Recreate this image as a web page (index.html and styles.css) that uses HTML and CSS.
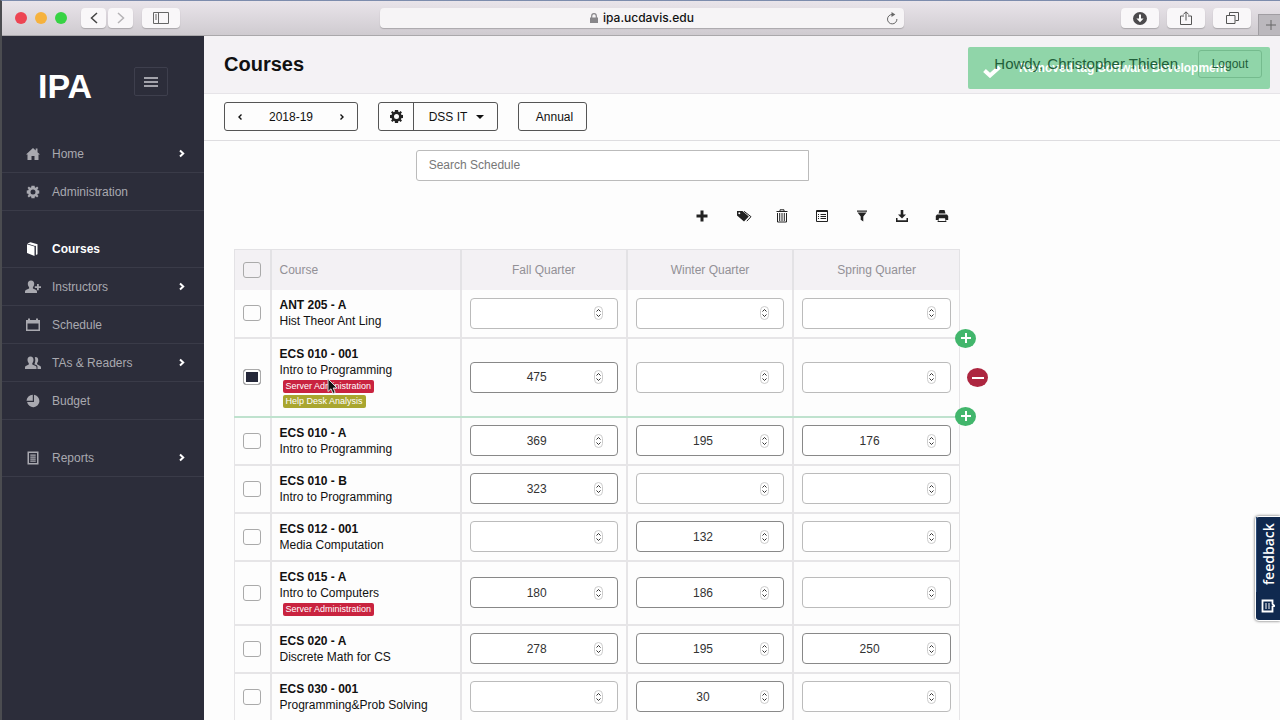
FILE: index.html
```html
<!DOCTYPE html>
<html lang="en">
<head>
    <meta charset="UTF-8">
    <meta name="viewport" content="width=device-width, initial-scale=1.0">
    <title>IPA - Courses</title>
    <link rel="stylesheet" href="styles.css">
</head>
<body>
    <!-- shared icons -->
    <svg class="sprite" aria-hidden="true">
        <symbol id="gear" viewBox="0 0 14 14">
            <path fill-rule="evenodd" d="M5.300 0h3.400l.3 1.900.9.4L11.400 1.100 12.900 2.600 11.700 4.100l.4 1 1.900.2v3.400l-1.900.2-.4 1 1.200 1.500-1.500 1.500-1.500-1.200-1 .4-.2 1.900H5.300l-.2-1.900-1-.4-1.500 1.200-1.500-1.500 1.200-1.500-.4-1L0 8.700V5.300l1.900-.2.4-1L1.100 2.600 2.600 1.100l1.500 1.200 1-.4zM7 4.300a2.700 2.700 0 1 0 0 5.400 2.700 2.700 0 0 0 0-5.400z"/>
        </symbol>
        <symbol id="chevron" viewBox="0 0 6 8">
            <path d="M1 1l3.200 3L1 7" fill="none" stroke="currentColor" stroke-width="2"/>
        </symbol>
        <symbol id="chevron-thin" viewBox="0 0 6 8">
            <path d="M1.500 1.500l2.500 2.500-2.500 2.500" fill="none" stroke="currentColor" stroke-width="1.400"/>
        </symbol>
    </svg>

    <header class="browser">
        <div class="lights"><span class="red"></span><span class="yellow"></span><span class="green"></span></div>
        <div class="nav-buttons">
            <button aria-label="Back"><svg width="8" height="12" viewBox="0 0 8 12"><path d="M7 1L1.500 6 7 11" fill="none" stroke="#444" stroke-width="1.500"/></svg></button>
            <button aria-label="Forward"><svg width="8" height="12" viewBox="0 0 8 12"><path d="M1 1l5.500 5L1 11" fill="none" stroke="#b5b3b6" stroke-width="1.500"/></svg></button>
        </div>
        <button class="wide" aria-label="Sidebar"><svg width="16" height="12" viewBox="0 0 16 12"><path d="M.5.5h15v11H.5zM5.500.5v11M2 3h2M2 5h2M2 7h2" fill="none" stroke="#666"/></svg></button>
        <div class="address">
            <svg width="8" height="10" viewBox="0 0 8 10"><path d="M0 4.500h8V10H0z" fill="#88868a"/><path d="M1.700 5V3a2.300 2.300 0 0 1 4.600 0v2" fill="none" stroke="#88868a" stroke-width="1.200"/></svg>
            <span>ipa.ucdavis.edu</span>
            <button class="reload" aria-label="Reload"><svg width="12" height="13" viewBox="0 0 12 13"><path d="M6.500 2.500A4.700 4.700 0 1 0 10.900 7" fill="none" stroke="#666"/><path d="M5.500 0L9.300 2.500 5.500 5z" fill="#666"/></svg></button>
        </div>
        <div class="right-buttons">
            <button class="wide" aria-label="Downloads"><svg width="14" height="13" viewBox="0 0 14 13"><ellipse cx="7" cy="6.500" rx="7" ry="6.500" fill="#4c4a4d"/><path d="M6 2.500h2v4h2.600L7 10.300 3.400 6.500H6z" fill="#fff"/></svg></button>
            <button class="wide" aria-label="Share"><svg width="12" height="14" viewBox="0 0 12 14"><path d="M4 5H.5v8.500h11V5H8M6 9.500V1M3.300 3.500L6 .800l2.700 2.700" fill="none" stroke="#555"/></svg></button>
            <button class="wide" aria-label="Tabs"><svg width="13" height="12" viewBox="0 0 13 12"><path d="M.5 3.500h8.500v8H.5zM3.500 3V.5h9v8H9.500" fill="none" stroke="#555"/></svg></button>
        </div>
        <button class="new-tab" aria-label="New tab"><svg width="12" height="12" viewBox="0 0 12 12"><path d="M6 1v10M1 6h10" stroke="#666"/></svg></button>
    </header>

    <div class="app">
        <aside class="sidebar">
            <div class="brand">
                <span class="logo">IPA</span>
                <button class="menu-toggle" aria-label="Toggle menu"><svg width="14" height="10" viewBox="0 0 14 10"><path d="M0 1h14M0 5h14M0 9h14" stroke="#a3a3ab" stroke-width="2"/></svg></button>
            </div>
            <nav>
                <ul>
                    <li><a href="#"><svg viewBox="0 0 16 14"><path d="M8 1L1 7.500h1.500V13h4V9h3v4h4V7.500H15l-2.500-2.300V1.500h-1.800v2z"/></svg>Home<svg class="more"><use href="#chevron"/></svg></a></li>
                    <li><a href="#"><svg viewBox="0 0 16 14"><use href="#gear" x="1.500" y=".5" width="13" height="13"/></svg>Administration</a></li>
                </ul>
                <ul>
                    <li class="active"><a href="#"><svg viewBox="0 0 16 14"><path d="M2 2.200L9.500 4.600V14L2 11z"/><path d="M2.300 1.500L5.500.200l7 2v10l-1.600.8V3.700L10 4z"/></svg>Courses</a></li>
                    <li><a href="#"><svg viewBox="0 0 16 14"><path d="M6 .500c2.200 0 3.200 1.400 3.200 3.300 0 1.600-.600 2.600-1.300 3.400v1.300l3.300 1.600c.500.300.8.900.8 1.500V13H0v-1.400c0-.600.300-1.200.8-1.500l3.300-1.600V7.200C3.400 6.400 2.800 5.400 2.800 3.800 2.800 1.900 3.800.500 6 .500z"/><path d="M12 4h1.800v2.200H16V8h-2.200v2.200H12V8H9.800V6.200H12z"/></svg>Instructors<svg class="more"><use href="#chevron"/></svg></a></li>
                    <li><a href="#"><svg viewBox="0 0 16 14"><path fill-rule="evenodd" d="M1 2h2V.5h2V2h6V.5h2V2h2v11H1zM2.500 5.500v6h11v-6z"/></svg>Schedule</a></li>
                    <li><a href="#"><svg viewBox="0 0 16 14"><path d="M10.500 1c1.800 0 2.700 1.300 2.700 3 0 1.500-.500 2.400-1.100 3.100v1.200l3 1.600c.600.300.9.800.9 1.400V13h-3.500v-2c0-1-.5-1.600-1.300-2L9.400 8.200c.600-1.200.9-2.500.9-4 0-1-.2-1.900-.5-2.800z"/><path d="M5.500.500c2.100 0 3 1.400 3 3.300 0 1.600-.500 2.600-1.200 3.400v1.300l3.300 1.500c.600.300.9.800.9 1.400V13H0v-1.600c0-.600.3-1.100.8-1.400l3-1.500V7.200C3.100 6.400 2.500 5.400 2.500 3.800 2.500 1.900 3.400.500 5.500.500z"/></svg>TAs &amp; Readers<svg class="more"><use href="#chevron"/></svg></a></li>
                    <li><a href="#"><svg viewBox="0 0 16 14"><path d="M9 .800a6.200 6.200 0 1 1-6.900 7.200H9zM7.800.800V6.800H1.500A6.300 6.300 0 0 1 7.800.800z"/></svg>Budget</a></li>
                </ul>
                <ul>
                    <li><a href="#"><svg viewBox="0 0 16 14"><path fill-rule="evenodd" d="M2.500.5h11v13h-11zM4 2v10h8V2z"/><path d="M5.300 3.500h5.400v1.200H5.300zM5.300 5.500h5.400v1.200H5.300zM5.300 7.500h5.400v1.200H5.300zM5.300 9.500h5.400v1.200H5.300z"/></svg>Reports<svg class="more"><use href="#chevron"/></svg></a></li>
                </ul>
            </nav>
        </aside>

        <main>
            <div class="page-header">
                <h1>Courses</h1>
                <div class="user">
                    <span>Howdy, Christopher Thielen</span>
                    <button>Logout</button>
                </div>
            </div>

            <div class="filters">
                <div class="group year">
                    <button aria-label="Previous year"><svg class="flip" width="6" height="8"><use href="#chevron-thin"/></svg></button>
                    <span>2018-19</span>
                    <button aria-label="Next year"><svg width="6" height="8"><use href="#chevron-thin"/></svg></button>
                </div>
                <div class="group">
                    <button class="settings" aria-label="Settings"><svg width="13" height="13"><use href="#gear"/></svg></button>
                    <button class="unit">DSS IT <span class="caret"></span></button>
                </div>
                <button class="group annual">Annual</button>
            </div>

            <div class="content">
                <input type="text" class="search" placeholder="Search Schedule" aria-label="Search Schedule">

                <div class="actions">
                    <button aria-label="Add"><svg viewBox="0 0 14 14"><path d="M5.500 1.500h3v4h4v3h-4v4h-3v-4h-4v-3h4z"/></svg></button>
                    <button aria-label="Tags"><svg class="tags" viewBox="0 0 16 14"><path fill-rule="evenodd" d="M1 2h5.500l6.300 5.500L8 12.500 1 6.500zM3.300 3.200a1 1 0 1 0 0 2 1 1 0 0 0 0-2z"/><path d="M8 2.300L15 7.700l-4.200 4.500" fill="none" stroke="#222"/></svg></button>
                    <button aria-label="Delete"><svg viewBox="0 0 14 14"><path d="M5 2V.8h4V2M1.500 2.500h11M2.500 4v9h9V4M4.700 4v8M7 4v8M9.300 4v8" fill="none" stroke="#222"/></svg></button>
                    <button aria-label="List"><svg viewBox="0 0 14 14"><path d="M1.500 1.500h11v11h-11zM1 2.500h12M3 5.500h1M5.500 5.500H11M3 7.500h1M5.500 7.500H11M3 9.500h1M5.500 9.500H11" fill="none" stroke="#222"/></svg></button>
                    <button aria-label="Filter"><svg viewBox="0 0 14 14"><path d="M2 1.500h10v1.200H2zM2.500 3.500h9L8.300 7.500v5l-2.600-1.800V7.500z"/></svg></button>
                    <button aria-label="Download"><svg viewBox="0 0 14 14"><path d="M5.700 1h2.600v4.500H11L7 9.500 3 5.500h2.700zM1 9h1.500v2.300h9V9H13v4H1z"/></svg></button>
                    <button aria-label="Print"><svg viewBox="0 0 14 14"><path fill-rule="evenodd" d="M3.500 4.500L4.500 1h5l1 3.500zM2 5.500h10l1.200 1.500v4H11l.5 2h-9l.5-2H.8V7zM4 9.300l-.6 2.700h7.200L10 9.300z"/></svg></button>
                </div>

                <table>
                    <colgroup><col class="col-check"><col class="col-course"><col><col><col></colgroup>
                    <thead>
                        <tr>
                            <th><input type="checkbox" aria-label="Select all"></th>
                            <th class="course">Course</th>
                            <th>Fall Quarter</th>
                            <th>Winter Quarter</th>
                            <th>Spring Quarter</th>
                        </tr>
                    </thead>
                    <tbody>
                        <tr>
                            <td><input type="checkbox" aria-label="Select ANT 205 - A"></td>
                            <td class="course"><strong>ANT 205 - A</strong><p>Hist Theor Ant Ling</p></td>
                            <td><input type="number" aria-label="Fall"></td>
                            <td><input type="number" aria-label="Winter"></td>
                            <td><input type="number" aria-label="Spring"></td>
                        </tr>
                        <tr class="selected">
                            <td><input type="checkbox" checked aria-label="Select ECS 010 - 001"></td>
                            <td class="course">
                                <strong>ECS 010 - 001</strong><p>Intro to Programming</p>
                                <div class="tag-list">
                                    <div class="tag server">Server Administration</div>
                                    <div class="tag help">Help Desk Analysis</div>
                                </div>
                                <svg class="pointer" width="12" height="17" viewBox="0 0 12 17"><path d="M1 1v12.500l3-2.700 2 4.700 2.200-1L6.200 10H10z" fill="#111" stroke="#ddd"/></svg>
                            </td>
                            <td><input type="number" value="475" aria-label="Fall"></td>
                            <td><input type="number" aria-label="Winter"></td>
                            <td>
                                <input type="number" aria-label="Spring">
                                <button class="round add above" aria-label="Add row above"><svg viewBox="0 0 12 12"><path d="M6 1v10M1 6h10"/></svg></button>
                                <button class="round remove" aria-label="Remove row"><svg viewBox="0 0 12 12"><path d="M0 6h12"/></svg></button>
                                <button class="round add below" aria-label="Add row below"><svg viewBox="0 0 12 12"><path d="M6 1v10M1 6h10"/></svg></button>
                            </td>
                        </tr>
                        <tr>
                            <td><input type="checkbox" aria-label="Select ECS 010 - A"></td>
                            <td class="course"><strong>ECS 010 - A</strong><p>Intro to Programming</p></td>
                            <td><input type="number" value="369" aria-label="Fall"></td>
                            <td><input type="number" value="195" aria-label="Winter"></td>
                            <td><input type="number" value="176" aria-label="Spring"></td>
                        </tr>
                        <tr>
                            <td><input type="checkbox" aria-label="Select ECS 010 - B"></td>
                            <td class="course"><strong>ECS 010 - B</strong><p>Intro to Programming</p></td>
                            <td><input type="number" value="323" aria-label="Fall"></td>
                            <td><input type="number" aria-label="Winter"></td>
                            <td><input type="number" aria-label="Spring"></td>
                        </tr>
                        <tr>
                            <td><input type="checkbox" aria-label="Select ECS 012 - 001"></td>
                            <td class="course"><strong>ECS 012 - 001</strong><p>Media Computation</p></td>
                            <td><input type="number" aria-label="Fall"></td>
                            <td><input type="number" value="132" aria-label="Winter"></td>
                            <td><input type="number" aria-label="Spring"></td>
                        </tr>
                        <tr>
                            <td><input type="checkbox" aria-label="Select ECS 015 - A"></td>
                            <td class="course">
                                <strong>ECS 015 - A</strong><p>Intro to Computers</p>
                                <div class="tag-list">
                                    <div class="tag server">Server Administration</div>
                                </div>
                            </td>
                            <td><input type="number" value="180" aria-label="Fall"></td>
                            <td><input type="number" value="186" aria-label="Winter"></td>
                            <td><input type="number" aria-label="Spring"></td>
                        </tr>
                        <tr>
                            <td><input type="checkbox" aria-label="Select ECS 020 - A"></td>
                            <td class="course"><strong>ECS 020 - A</strong><p>Discrete Math for CS</p></td>
                            <td><input type="number" value="278" aria-label="Fall"></td>
                            <td><input type="number" value="195" aria-label="Winter"></td>
                            <td><input type="number" value="250" aria-label="Spring"></td>
                        </tr>
                        <tr>
                            <td><input type="checkbox" aria-label="Select ECS 030 - 001"></td>
                            <td class="course"><strong>ECS 030 - 001</strong><p>Programming&amp;Prob Solving</p></td>
                            <td><input type="number" aria-label="Fall"></td>
                            <td><input type="number" value="30" aria-label="Winter"></td>
                            <td><input type="number" aria-label="Spring"></td>
                        </tr>
                    </tbody>
                </table>
            </div>

            <div class="toast">
                <svg width="18" height="13" viewBox="0 0 18 13"><path d="M1.500 5.500l5.500 5L16.500 2" fill="none" stroke="#fff" stroke-width="4"/></svg>
                <span>Removed tag Software Development</span>
            </div>
            <button class="feedback">
                <svg width="14" height="15" viewBox="0 0 14 15"><path d="M1.500 1.500h10V5l2 2-2 .5v5h-10z" fill="none" stroke="#fff" stroke-width="1.800"/><path d="M5 4v6M8 4v6" stroke="#fff"/></svg>
                <span>feedback</span>
            </button>
        </main>
    </div>
</body>
</html>
```
FILE: styles.css
```css
* {
    box-sizing: border-box;
}
body {
    display: flex;
    flex-direction: column;
    height: 100vh;
    margin: 0;
    overflow: hidden;
    border-top: 1px solid #7d8cad;
    border-left: 2px solid #4b4c50;
    background: #fdfdfd;
    color: #111;
    font-family: "Liberation Sans", Arial, sans-serif;
    font-size: 12px;
    line-height: 16px;
}
button {
    display: flex;
    align-items: center;
    justify-content: center;
    margin: 0;
    padding: 0;
    border: none;
    background: none;
    color: inherit;
    font: inherit;
    cursor: pointer;
}
.sprite {
    position: absolute;
    width: 0;
    height: 0;
}

/* browser bar */
.browser {
    position: relative;
    display: flex;
    flex: none;
    align-items: center;
    height: 35px;
    padding: 0 29px 0 13px;
    border-bottom: 1px solid #aaa8ab;
    background: linear-gradient(#e9e4ea, #cfcbd0);
}
.lights {
    display: flex;
    gap: 8px;
}
.lights span {
    width: 12px;
    height: 12px;
    border-radius: 50%;
}
.red { background: #ed4553; }
.yellow { background: #f6b23d; }
.green { background: #37d344; }
.browser button {
    width: 25px;
    height: 20px;
    border-radius: 4px;
    background: #f9f7f9;
    box-shadow: 0 1px 1px #aaa7ab;
}
.browser .wide {
    width: 38px;
}
.nav-buttons {
    display: flex;
    gap: 2px;
    margin: 0 9px 0 14px;
}
.address {
    position: relative;
    display: flex;
    flex: 1;
    align-items: center;
    justify-content: center;
    gap: 5px;
    height: 20px;
    margin: 0 217px 0 200px;
    border-radius: 4px;
    background: #f6f4f6;
    box-shadow: 0 1px 1px #aaa7ab;
    font-family: Inter, sans-serif;
    font-size: 12px;
    font-weight: 500;
}
.browser .reload {
    position: absolute;
    right: 0;
    background: none;
    box-shadow: none;
}
.right-buttons {
    display: flex;
    gap: 8px;
}
.browser .new-tab {
    position: absolute;
    right: 0;
    bottom: 0;
    width: 22px;
    height: 21px;
    padding-left: 3px;
    border: 1px solid #a09da2;
    border-width: 1px 0 0 1px;
    border-radius: 0;
    background: #bbb8bd;
    box-shadow: none;
}

.app {
    display: flex;
    flex: 1;
    min-height: 0;
}

/* sidebar */
.sidebar {
    flex: none;
    width: 202px;
    background: #2c2d3a;
    color: #a9a9b0;
}
.brand {
    display: flex;
    align-items: center;
    justify-content: space-between;
    height: 99px;
    padding: 0 36px;
}
.logo {
    color: #fff;
    font-size: 34px;
    font-weight: bold;
    line-height: 36px;
}
.menu-toggle {
    width: 34px;
    height: 29px;
    margin-bottom: 8px;
    border: 1px solid #3e3f4d;
    border-radius: 2px;
}
.sidebar ul {
    margin: 0 0 19px;
    padding: 0;
    list-style: none;
}
.sidebar li {
    border-bottom: 1px solid #3a3b48;
}
.sidebar a {
    display: flex;
    align-items: center;
    height: 37px;
    padding: 0 19px 0 23px;
    color: inherit;
    text-decoration: none;
}
.sidebar a svg {
    width: 16px;
    height: 14px;
    margin-right: 11px;
    fill: currentColor;
}
.sidebar .more {
    width: 6px;
    height: 9px;
    margin: 0 0 0 auto;
    color: #fff;
}
.sidebar .active {
    color: #fff;
    font-weight: bold;
}

/* main column */
main {
    position: relative;
    flex: 1;
    min-width: 0;
    overflow: hidden;
}
.page-header {
    display: flex;
    align-items: center;
    justify-content: space-between;
    height: 58px;
    padding: 0 18px 2px 20px;
    border-bottom: 1px solid #e6e4e8;
    background: #f4f2f5;
}
h1 {
    margin: 0;
    font-size: 20px;
    line-height: 24px;
}
.user {
    position: relative;
    z-index: 2;
    display: flex;
    align-items: center;
    gap: 20px;
    font-size: 15px;
    color: #1f5f3a;
}
.user button {
    width: 64px;
    height: 28px;
    border: 1px solid #75bb8e;
    border-radius: 3px;
    font-size: 12px;
}
.filters {
    display: flex;
    align-items: center;
    gap: 20px;
    height: 47px;
    padding: 0 0 1px 20px;
    border-bottom: 1px solid #dedde0;
}
.group {
    display: flex;
    align-items: center;
    height: 29px;
    border: 1px solid #555;
    border-radius: 3px;
}
.group button {
    height: 100%;
}
.year {
    width: 134px;
    justify-content: space-between;
}
.year button {
    width: 30px;
}
.flip {
    transform: scaleX(-1);
}
.settings {
    width: 35px;
    border-right: 1px solid #555;
    fill: #222;
}
.unit {
    width: 83px;
    padding-left: 2px;
    gap: 9px;
}
.caret {
    border: 4px solid transparent;
    border-top-color: #111;
    border-bottom: 0;
}
.annual {
    width: 69px;
    padding-left: 4px;
}

.content {
    margin: 0 289px 0 30px;
}
.search {
    display: block;
    width: 52%;
    height: 31px;
    margin: 9px auto 19px;
    padding: 0 12px 2px;
    border: 1px solid #bbb;
    border-radius: 3px 0 0 3px;
    background: #fff;
    font: inherit;
}
.search::placeholder {
    color: #777;
}
.actions {
    display: flex;
    justify-content: flex-end;
    margin: 0 29px 17px 0;
}
.actions button {
    width: 40px;
    height: 32px;
}
.actions svg {
    width: 14px;
    height: 14px;
    fill: #222;
}
.actions .tags {
    width: 16px;
    margin-left: 4px;
}

/* schedule table */
table {
    width: calc(100% - 31px);
    border-collapse: collapse;
    table-layout: fixed;
    border: 1px solid #e3e2e5;
}
.col-check {
    width: 36px;
}
.col-course {
    width: 190px;
}
th {
    height: 40px;
    padding: 0;
    border: 1px solid #e3e2e5;
    border-width: 0 2px;
    background: #f3f1f4;
    color: #929096;
    font-weight: normal;
}
td {
    position: relative;
    height: 48px;
    padding: 0;
    border: 2px solid #e6e5e7;
    text-align: center;
}
thead + tbody tr:first-child td {
    border-top-width: 0;
}
th:first-child,
td:first-child {
    border-left-width: 1px;
}
th:last-child,
td:last-child {
    border-right-width: 1px;
}
.selected td {
    border-top-color: #d3dfda;
    border-bottom-color: #bfe2ce;
}
.course {
    padding: 7px 8px;
    text-align: left;
}
.course strong,
.course p {
    display: block;
    margin: 0;
}
input[type="checkbox"] {
    display: block;
    width: 18px;
    height: 16px;
    margin: 0 auto;
    border: 1px solid #aaa;
    border-radius: 3px;
    appearance: none;
}
input[type="checkbox"]:checked {
    background: #25283a;
    box-shadow: inset 0 0 0 2px #fff;
}
input[type="number"] {
    display: block;
    width: calc(100% - 16px);
    height: 31px;
    margin: 0 auto;
    padding: 0 25px 0 11px;
    border: 1px solid #888;
    border-radius: 4px;
    background: #fff url("data:image/svg+xml,%3Csvg xmlns='http://www.w3.org/2000/svg' width='9' height='14'%3E%3Crect x='.5' y='.5' width='8' height='13' rx='4' fill='%23fff' stroke='%23ccc'/%3E%3Cpath d='M2.500 5.500l2-2 2 2M2.500 8.500l2 2 2-2' fill='none' stroke='%23333'/%3E%3C/svg%3E") no-repeat right 14px center;
    color: #333;
    font: inherit;
    text-align: center;
    appearance: textfield;
}
input[type="number"]::-webkit-inner-spin-button {
    display: none;
    appearance: none;
}
input[type="number"]:not([value]) {
    border-color: #bbb;
}
.tag-list {
    padding-bottom: 1px;
}
.tag {
    width: fit-content;
    margin: 2px 0 0 3px;
    padding: 0 3px;
    border-radius: 2px;
    color: #fff;
    font-size: 9px;
    line-height: 13px;
}
.server { background: #c9233f; }
.help { background: #a9a62f; }
.pointer {
    position: absolute;
    top: 39px;
    left: 55px;
}
.round {
    position: absolute;
    width: 21px;
    height: 19px;
    border-radius: 50%;
}
.round svg {
    width: 12px;
    height: 12px;
    stroke: #fff;
    stroke-width: 2;
}
.add {
    right: -17px;
    background: #42b66c;
}
.above { top: -10px; }
.below { bottom: -10px; }
.remove {
    top: 50%;
    right: -29px;
    margin-top: -9px;
    background: #ad2640;
}

/* overlays */
.toast {
    position: absolute;
    z-index: 1;
    top: 11px;
    right: 10px;
    display: flex;
    align-items: center;
    gap: 18px;
    width: 302px;
    height: 42px;
    padding-left: 15px;
    border-radius: 2px;
    background: rgba(26, 178, 79, .46);
    color: #fff;
    font-weight: bold;
}
.toast svg {
    margin-top: 6px;
}
.feedback {
    position: absolute;
    top: 480px;
    right: 0;
    flex-direction: column-reverse;
    justify-content: flex-start;
    width: 25px;
    height: 105px;
    border: 1px solid #fff;
    border-right: none;
    border-radius: 4px 0 0 4px;
    background: #10294f;
    box-shadow: 0 0 3px #555;
    color: #fff;
    font-family: "Open Sans", sans-serif;
    font-size: 14px;
    font-weight: 600;
}
.feedback svg {
    flex: none;
    margin: 7px 0 6px;
}
.feedback span {
    display: flex;
    align-items: center;
    justify-content: center;
    flex: 1;
    width: 100%;
    border-right: 1px solid #2c4c78;
    writing-mode: vertical-rl;
    transform: rotate(180deg);
}
```
